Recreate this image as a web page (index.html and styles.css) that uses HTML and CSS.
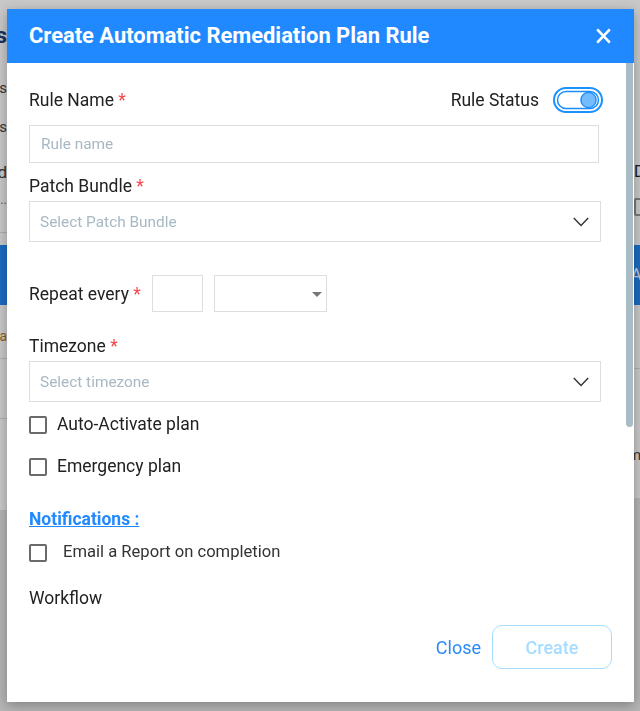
FILE: index.html
```html
<!DOCTYPE html>
<html lang="en">
<head>
<meta charset="utf-8">
<title>Create Automatic Remediation Plan Rule</title>
<link rel="stylesheet" href="styles.css">
</head>
<body>
<div class="page">
  <div class="pl">
    <div class="pl-title">Patches</div>
    <div class="pl-text pl-t1">Rules</div>
    <div class="pl-text pl-t2">Plans</div>
    <div class="pl-text pl-t3">Patched</div>
    <div class="pl-dots">...</div>
    <div class="pl-sep"></div>
    <div class="pl-blue"></div>
    <div class="pl-link">Data</div>
    <div class="pl-sep pl-sep2"></div>
    <div class="pl-sep pl-sep3"></div>
  </div>
  <div class="pm"></div>
  <div class="pr">
    <div class="pr-text">Date</div>
    <div class="pr-icon"></div>
    <div class="pr-blue">Act</div>
    <div class="pr-sep"></div>
    <div class="pr-text pr-m">more</div>
  </div>
</div>
<div class="overlay"></div>
<div class="modal">
  <div class="modal-header">
    <h2 class="modal-title">Create Automatic Remediation Plan Rule</h2>
    <button class="close-x" aria-label="Close">
      <svg width="15" height="16" viewBox="0 0 15 16"><path d="M1.2 1.4L13.8 14.6M13.8 1.4L1.2 14.6" stroke="#fff" stroke-width="2.6" fill="none"/></svg>
    </button>
  </div>
  <div class="modal-body">
    <div class="form">
      <div class="row-head">
        <div class="label">Rule Name <span class="req">*</span></div>
        <div class="status">
          <span class="status-text">Rule Status</span>
          <svg class="toggle" width="50" height="26" viewBox="0 0 50 26">
            <rect x="1" y="1" width="48" height="24" rx="12" fill="#fff" stroke="#1a92ff" stroke-width="2"/>
            <rect x="4.5" y="4.5" width="41" height="17" rx="8.5" fill="#fff" stroke="#1a8cff" stroke-width="1.5"/>
            <circle cx="35.5" cy="13" r="7.6" fill="#74bcff" stroke="#1a8cff" stroke-width="1.4"/>
          </svg>
        </div>
      </div>
      <input class="text-input" type="text" placeholder="Rule name">
      <div class="label mt-patch">Patch Bundle <span class="req">*</span></div>
      <div class="select">
        <span class="placeholder">Select Patch Bundle</span>
        <svg width="16" height="10" viewBox="0 0 16 10"><path d="M0.8 1L8 8.6L15.2 1" fill="none" stroke="#333" stroke-width="1.4"/></svg>
      </div>
      <div class="repeat-row">
        <div class="label">Repeat every <span class="req">*</span></div>
        <div class="num-box"></div>
        <div class="unit-select">
          <svg width="10" height="5" viewBox="0 0 10 5"><path d="M0 0H10L5 5Z" fill="#777"/></svg>
        </div>
      </div>
      <div class="label mt-tz">Timezone <span class="req">*</span></div>
      <div class="select">
        <span class="placeholder">Select timezone</span>
        <svg width="16" height="10" viewBox="0 0 16 10"><path d="M0.8 1L8 8.6L15.2 1" fill="none" stroke="#333" stroke-width="1.4"/></svg>
      </div>
      <div class="check mt-c1"><span class="box"></span><span class="check-text">Auto-Activate plan</span></div>
      <div class="check mt-c2"><span class="box"></span><span class="check-text">Emergency plan</span></div>
      <a class="notif" href="#">Notifications :</a>
      <div class="check mt-c3"><span class="box"></span><span class="check-text email">Email a Report on completion</span></div>
      <div class="label mt-wf">Workflow</div>
    </div>
    <div class="scroll-track"><div class="scroll-thumb"></div></div>
  </div>
  <div class="modal-footer">
    <button class="btn-close">Close</button>
    <button class="btn-create">Create</button>
  </div>
</div>
</body>
</html>
```

FILE: styles.css
```css
* { box-sizing: border-box; }
html, body { margin: 0; padding: 0; }
body {
  width: 640px;
  height: 711px;
  overflow: hidden;
  position: relative;
  background: #e6e6e6;
  font-family: Roboto, "Noto Sans", "Liberation Sans", sans-serif;
}

/* underlying page */
.page { display: flex; align-items: flex-start; height: 711px; }
.pl {
  width: 7px; height: 510px; background: #fff; overflow: hidden;
  display: flex; flex-direction: column; align-items: flex-end;
}
.pl > * { white-space: nowrap; flex-shrink: 0; }
.pl-title { margin-top: 23px; font-size: 22px; line-height: 26px; font-weight: 700; color: #20407a; }
.pl-text { font-size: 15px; line-height: 20px; color: #444; }
.pl-t1 { margin-top: 29px; }
.pl-t2 { margin-top: 19px; }
.pl-t3 { margin-top: 25px; font-size: 17px; }
.pl-dots { margin-top: 8px; font-size: 13px; line-height: 20px; color: #777; }
.pl-sep { width: 7px; height: 1px; background: #ddd; margin-top: 22px; }
.pl-blue { width: 7px; height: 60px; background: #2488f5; margin-top: 12px; }
.pl-link { margin-top: 21px; font-size: 14px; line-height: 20px; color: #b8772a; }
.pl-sep2 { margin-top: 12px; }
.pl-sep3 { margin-top: 59px; }
.pm { flex: 1; height: 505px; background: #fff; }
.pr {
  width: 6px; height: 498px; background: #fff; overflow: hidden;
  display: flex; flex-direction: column; align-items: flex-start;
}
.pr > * { white-space: nowrap; flex-shrink: 0; }
.pr-text { margin-top: 162px; font-size: 16px; line-height: 20px; color: #222; }
.pr-icon { margin-top: 16px; width: 14px; height: 18px; border: 2px solid #999; border-radius: 2px; }
.pr-blue { margin-top: 29px; width: 6px; height: 60px; background: #2488f5; color: #fff; font-size: 16px; line-height: 60px; text-indent: -3px; overflow: hidden; }
.pr-sep { margin-top: 63px; width: 6px; height: 1px; background: #ddd; }
.pr-m { margin-top: 76px; font-size: 15px; text-indent: -6px; color: #444; }

.overlay { position: fixed; inset: 0; background: rgba(0, 0, 0, 0.21); }

/* modal */
.modal {
  position: absolute; top: 9px; left: 7px;
  width: 627px; height: 693px;
  background: #fff;
  box-shadow: 0 3px 12px rgba(0, 0, 0, 0.3);
  display: flex; flex-direction: column; overflow: hidden;
}
.modal-header {
  height: 54px; flex-shrink: 0;
  background: #2189ff;
  display: flex; align-items: center; justify-content: space-between;
  padding: 0 23px 0 22px;
}
.modal-title { margin: 0; color: #fff; font-size: 21.9px; line-height: 26px; font-weight: 700; }
.close-x { display: block; width: 15px; height: 16px; padding: 0; border: 0; background: none; cursor: pointer; }
.close-x svg { display: block; }

.modal-body { height: 549px; flex-shrink: 0; display: flex; }
.form {
  flex: 1; overflow: hidden;
  padding: 24px 25px 0 22px;
  display: flex; flex-direction: column; align-items: flex-start;
}
.scroll-track { width: 8px; padding-right: 1px; flex-shrink: 0; }
.scroll-thumb { width: 7px; height: 364px; background: #a9bbc3; border-radius: 0 0 4px 4px; }

.label { font-size: 17.5px; line-height: 20px; color: #222; white-space: nowrap; }
.req { color: #f4474c; }

.row-head { width: 572px; height: 26px; display: flex; align-items: center; justify-content: space-between; }
.status { display: flex; align-items: center; gap: 14px; margin-right: -2px; }
.status-text { font-size: 17.5px; line-height: 20px; color: #222; }
.toggle { display: block; }

.text-input {
  margin-top: 12px; width: 570px; height: 38px;
  border: 1px solid #dedede; border-radius: 0; outline: none;
  padding: 0 11px;
  font-family: inherit; font-size: 15.4px; color: #333;
}
.text-input::placeholder { color: #a8b8c3; }

.select {
  margin-top: 5px; width: 572px; height: 41px;
  border: 1px solid #dedede;
  display: flex; align-items: center; justify-content: space-between;
  padding: 0 11px 0 10px;
}
.placeholder { font-size: 15.4px; color: #a8b8c3; }
.select svg { display: block; }

.mt-patch { margin-top: 13px; }
.mt-tz { margin-top: 24px; }

.repeat-row { margin-top: 33px; height: 37px; display: flex; align-items: center; }
.num-box { margin-left: 11px; width: 51px; height: 37px; border: 1px solid #dedede; }
.unit-select {
  margin-left: 11px; width: 113px; height: 37px; border: 1px solid #dedede;
  display: flex; align-items: center; justify-content: flex-end; padding-right: 4px;
}
.unit-select svg { display: block; margin-top: 2px; }

.check { height: 20px; display: flex; align-items: center; }
.box { width: 18px; height: 18px; border: 2px solid #6a6a6a; border-radius: 2px; flex-shrink: 0; margin-top: 2px; }
.check-text { margin-left: 10px; font-size: 17.5px; line-height: 20px; color: #222; }
.check-text.email { margin-left: 16px; font-size: 16.6px; color: #333; }
.mt-c1 { margin-top: 12px; }
.mt-c2 { margin-top: 22px; }
.mt-c3 { margin-top: 13px; }
.notif {
  margin-top: 33px; font-size: 17.5px; line-height: 20px; font-weight: 700;
  color: #2189ff; text-decoration: underline;
}
.mt-wf { margin-top: 26px; }

.modal-footer {
  flex: 1; display: flex; justify-content: flex-end; align-items: flex-start;
  padding: 13px 22px 0 0; gap: 11px;
}
.btn-close {
  height: 44px; padding: 0; border: 0; background: none;
  font-family: inherit; font-size: 18px; color: #2b8af7; cursor: pointer;
}
.btn-create {
  width: 120px; height: 44px; background: #fff;
  border: 1px solid #a6dcff; border-radius: 10px;
  font-family: inherit; font-size: 18px; font-weight: 500; color: #a6dcff;
}
```
